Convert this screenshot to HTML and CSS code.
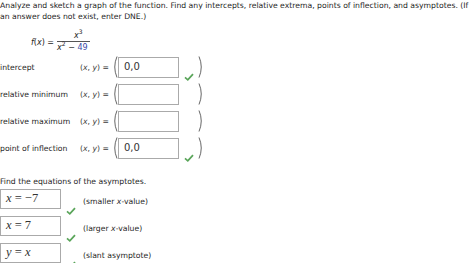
FILE: index.html
```html
<!DOCTYPE html>
<html>
<head>
<meta charset="utf-8">
<link rel="stylesheet" href="styles.css">
</head>
<body>
<div class="page">
  <p class="intro">Analyze and sketch a graph of the function. Find any intercepts, relative extrema, points of inflection, and asymptotes. (If an answer does not exist, enter DNE.)</p>
  <div class="func">
    <span class="fname"><i>f</i>(<i>x</i>) =</span>
    <span class="frac">
      <span class="num"><i>x</i><sup>3</sup></span>
      <span class="den"><i>x</i><sup>2</sup> − <span class="blue">49</span></span>
    </span>
  </div>
  <div class="rows">
    <div class="row">
      <span class="label">intercept</span>
      <span class="xy">(<i>x</i>, <i>y</i>) =</span>
      <svg class="paren" viewBox="0 0 6 22" width="6" height="22"><path d="M5 0.5 Q0.5 11 5 21.5" fill="none" stroke="#555" stroke-width="0.9"/></svg>
      <span class="box">0,0</span>
      <span class="chk"><svg viewBox="0 0 12 10" width="10" height="8"><path d="M1 5.5 L4.5 8.5 L11 1.5" fill="none" stroke="#5aa55a" stroke-width="2.2"/></svg></span>
      <svg class="paren" viewBox="0 0 6 22" width="6" height="22"><path d="M1 0.5 Q5.5 11 1 21.5" fill="none" stroke="#555" stroke-width="0.9"/></svg>
    </div>
    <div class="row">
      <span class="label">relative minimum</span>
      <span class="xy">(<i>x</i>, <i>y</i>) =</span>
      <svg class="paren" viewBox="0 0 6 22" width="6" height="22"><path d="M5 0.5 Q0.5 11 5 21.5" fill="none" stroke="#555" stroke-width="0.9"/></svg>
      <span class="box"></span>
      <span class="chk"></span>
      <svg class="paren" viewBox="0 0 6 22" width="6" height="22"><path d="M1 0.5 Q5.5 11 1 21.5" fill="none" stroke="#555" stroke-width="0.9"/></svg>
    </div>
    <div class="row">
      <span class="label">relative maximum</span>
      <span class="xy">(<i>x</i>, <i>y</i>) =</span>
      <svg class="paren" viewBox="0 0 6 22" width="6" height="22"><path d="M5 0.5 Q0.5 11 5 21.5" fill="none" stroke="#555" stroke-width="0.9"/></svg>
      <span class="box"></span>
      <span class="chk"></span>
      <svg class="paren" viewBox="0 0 6 22" width="6" height="22"><path d="M1 0.5 Q5.5 11 1 21.5" fill="none" stroke="#555" stroke-width="0.9"/></svg>
    </div>
    <div class="row">
      <span class="label">point of inflection</span>
      <span class="xy">(<i>x</i>, <i>y</i>) =</span>
      <svg class="paren" viewBox="0 0 6 22" width="6" height="22"><path d="M5 0.5 Q0.5 11 5 21.5" fill="none" stroke="#555" stroke-width="0.9"/></svg>
      <span class="box">0,0</span>
      <span class="chk"><svg viewBox="0 0 12 10" width="10" height="8"><path d="M1 5.5 L4.5 8.5 L11 1.5" fill="none" stroke="#5aa55a" stroke-width="2.2"/></svg></span>
      <svg class="paren" viewBox="0 0 6 22" width="6" height="22"><path d="M1 0.5 Q5.5 11 1 21.5" fill="none" stroke="#555" stroke-width="0.9"/></svg>
    </div>
  </div>
  <p class="find">Find the equations of the asymptotes.</p>
  <div class="asy">
    <div class="arow">
      <span class="abox"><i>x</i> = −7</span>
      <span class="chk"><svg viewBox="0 0 12 10" width="10" height="8"><path d="M1 5.5 L4.5 8.5 L11 1.5" fill="none" stroke="#5aa55a" stroke-width="2.2"/></svg></span>
      <span class="alabel">(smaller <i>x</i>-value)</span>
    </div>
    <div class="arow">
      <span class="abox"><i>x</i> = 7</span>
      <span class="chk"><svg viewBox="0 0 12 10" width="10" height="8"><path d="M1 5.5 L4.5 8.5 L11 1.5" fill="none" stroke="#5aa55a" stroke-width="2.2"/></svg></span>
      <span class="alabel">(larger <i>x</i>-value)</span>
    </div>
    <div class="arow">
      <span class="abox"><i>y</i> = <i>x</i></span>
      <span class="chk"><svg viewBox="0 0 12 10" width="10" height="8"><path d="M1 5.5 L4.5 8.5 L11 1.5" fill="none" stroke="#5aa55a" stroke-width="2.2"/></svg></span>
      <span class="alabel">(slant asymptote)</span>
    </div>
  </div>
</div>
</body>
</html>
```
FILE: styles.css
```css
* { box-sizing: border-box; }
html, body { margin: 0; padding: 0; background: #fff; }
body { font-family: "DejaVu Sans", Verdana, sans-serif; font-size: 7.7px; color: #262626; }
.page { padding: 1px 0 0 0; }
.intro { margin: 0; line-height: 10.5px; padding-right: 2px; }
.func { display: flex; align-items: center; margin: 7px 0 0 31px; height: 24px; font-size: 8px; }
.fname { margin: 3px 3px 0 0; }
.frac { display: inline-flex; flex-direction: column; align-items: center; }
.num { padding: 0 0 1px 10px; border-bottom: 1px solid #555; width: 100%; text-align: center; }
.den { padding: 1px 2px 0 0; }
sup { font-size: 6px; vertical-align: 4px; line-height: 0; }
.blue { color: #3a4aa8; }
.rows { margin-top: 3px; display: flex; flex-direction: column; gap: 6px; }
.row { display: grid; grid-template-columns: 80px 32px 6px 61px 19px 6px; align-items: center; height: 21px; }
.xy { color: #3a3a3a; }
.paren { display: block; }
.box { height: 21px; border: 1px solid #aaa; font-size: 10px; padding: 3px 0 0 5px; color: #333; }
.row .chk { align-self: start; padding: 17px 0 0 5px; height: 21px; }
.find { margin: 19px 0 0 0; }
.asy { margin-top: 3px; display: flex; flex-direction: column; gap: 7px; }
.arow { display: grid; grid-template-columns: 61px 22px auto; align-items: start; height: 20px; }
.abox { height: 20px; border: 1px solid #aaa; font-family: "Liberation Serif", serif; font-size: 12.5px; padding: 1px 0 0 5px; color: #333; }
.arow .chk { padding: 18px 0 0 5px; height: 20px; }
.alabel { padding-top: 8px; line-height: 10px; }
```
